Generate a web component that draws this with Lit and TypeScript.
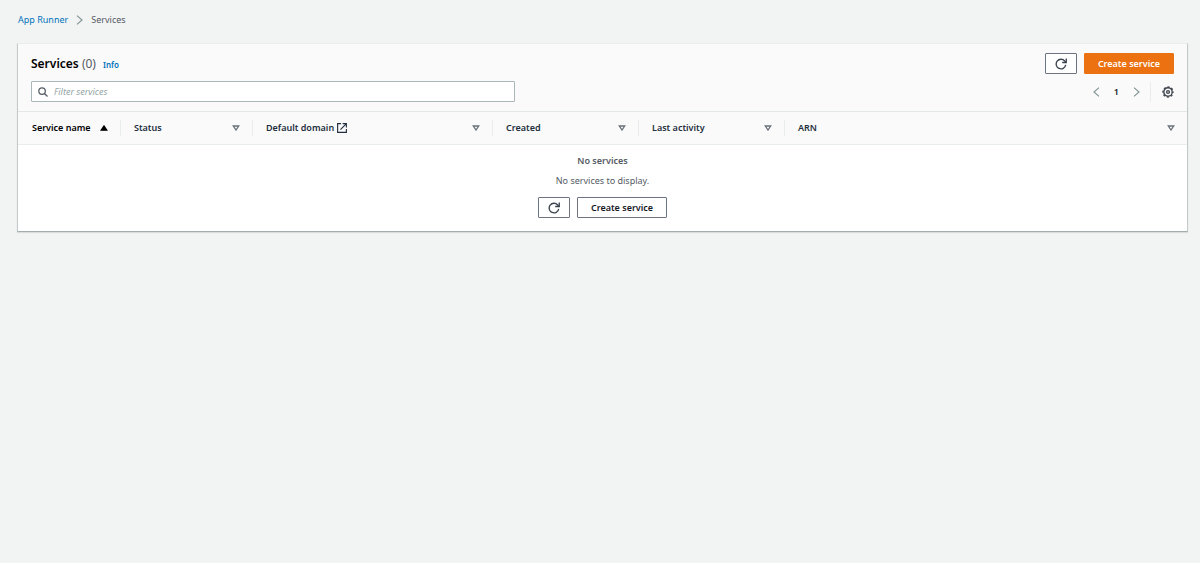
import { LitElement, html, css, svg, nothing } from "lit";
import { customElement, state } from "lit/decorators.js";

interface Column {
  label: string;
  size: string;
  external?: boolean;
}

const COLUMNS: Column[] = [
  { label: "Service name", size: "c-name" },
  { label: "Status", size: "c-status" },
  { label: "Default domain", size: "c-domain", external: true },
  { label: "Created", size: "c-date" },
  { label: "Last activity", size: "c-date" },
  { label: "ARN", size: "c-arn" },
];

const refreshIcon = html`<svg class="icon" width="12" height="12" viewBox="0 0 16 16" aria-hidden="true">
  ${svg`<path d="M14.3 9.2A6.4 6.4 0 1 1 12.9 4L14.6 5.6"/><path d="M15 0.8V6H9.6"/>`}
</svg>`;

const gearIcon = html`<svg class="gear" width="12" height="12" viewBox="0 0 24 24" aria-hidden="true">
  ${svg`<circle cx="12" cy="12" r="8.4" stroke-width="2.8"/>
  <circle cx="12" cy="12" r="2.8" stroke-width="2.8"/>
  <circle cx="12" cy="12" r="10.2" stroke-width="2.6" pathLength="80" stroke-dasharray="5 5" stroke-dashoffset="2.5"/>`}
</svg>`;

@customElement("app-root")
export class AppRoot extends LitElement {
  @state() private sortIndex = 0;

  static styles = css`
    :host {
      display: block;
      box-sizing: border-box;
      min-height: 100vh;
      padding: 13px 12px 13px 17px;
      background: #f2f3f3;
      color: #545b64;
      font: 9px/14px "Noto Sans", "Open Sans", sans-serif;
    }
    *, *::before, *::after { box-sizing: border-box; }
    svg { display: block; fill: none; flex: none; }
    button, input { font: inherit; color: inherit; margin: 0; }
    button { cursor: pointer; }
    a { color: #0073bb; text-decoration: none; }

    .crumbs {
      display: flex;
      align-items: center;
      gap: 8px;
      margin: 0 0 16px;
      padding: 0 0 0 1px;
      list-style: none;
    }
    .crumbs li { display: flex; align-items: center; gap: 8px; }
    .chevron { stroke: #879596; stroke-width: 1.2; }

    .card {
      background: #fff;
      border: 1px solid #c3c9c9;
      border-top-color: #eaeded;
      border-bottom-color: #a3adad;
      box-shadow: 0 1px 1px rgba(0, 28, 36, 0.1);
    }
    .head {
      display: grid;
      gap: 7px;
      padding: 9px 13px;
      background: #fafafa;
    }
    .row { display: flex; align-items: center; justify-content: space-between; }
    .title { display: flex; align-items: baseline; gap: 7px; }
    h2 { margin: 0; font-size: 12px; line-height: 21px; font-weight: 600; color: #000; }
    .count { font-weight: 400; color: #545b64; }
    .info { font-size: 8px; font-weight: 600; }

    .actions { display: flex; justify-content: center; gap: 7px; }
    .btn {
      display: flex;
      align-items: center;
      justify-content: center;
      height: 21px;
      padding: 0 13px;
      border: 1px solid #6b7480;
      border-radius: 1px;
      background: #fff;
      color: #16191f;
      font-weight: 600;
    }
    .square { width: 32px; padding: 0; }
    .primary { background: #ec7211; border-color: #ec7211; color: #fff; }
    .icon { stroke: #3c4450; stroke-width: 1.8; }

    .filter {
      display: flex;
      align-items: center;
      gap: 6px;
      width: 484px;
      height: 21px;
      padding: 0 6px;
      border: 1px solid #aab7b8;
      border-radius: 1px;
      background: #fff;
    }
    .filter svg { stroke: #545b64; stroke-width: 2; }
    .filter input { flex: 1; min-width: 0; padding: 0; border: 0; outline: 0; background: none; }
    .filter input::placeholder { color: #95a5a6; font-style: italic; opacity: 1; }

    .pager { display: flex; align-items: center; }
    .flat { display: flex; padding: 0; border: 0; background: none; }
    .page { padding: 0 14px; color: #16191f; font-weight: 600; }
    .prefs { margin-left: 10px; padding-left: 11px; border-left: 1px solid #eaeded; height: 20px; display: flex; align-items: center; }
    .gear { stroke: #414750; }

    table { width: 100%; border-collapse: collapse; table-layout: fixed; border-top: 1px solid #e3e7e7; }
    th { padding: 8px 0; background: #fafafa; border-bottom: 1px solid #eaeded; font-weight: 600; text-align: left; color: #232f3e; }
    .cell {
      display: flex;
      align-items: center;
      width: 100%;
      height: 16px;
      padding: 0 12px 0 13px;
      border: 0;
      border-right: 1px solid #eaeded;
      background: none;
      font-weight: 600;
    }
    th:first-child .cell { padding-left: 14px; }
    th:last-child .cell { border-right: 0; }
    .cell .ext { margin-left: 3px; stroke: #232f3e; stroke-width: 1.8; }
    .cell .sort { margin-left: auto; stroke: #687078; stroke-width: 1.3; }
    .sorted { color: #000; }
    .cell .sort.up { fill: #000; stroke: #000; }
    .c-name { width: 103px; }
    .c-status { width: 132px; }
    .c-domain { width: 240px; }
    .c-date { width: 146px; }
    td { padding: 9px 0 13px; text-align: center; }
    .none { margin: 0 0 6px; font-weight: 600; }
    .hint { margin: 0 0 9px; }
  `;

  private header(col: Column, i: number) {
    const on = i === this.sortIndex;
    return html`<th scope="col" aria-sort=${on ? "ascending" : nothing}>
      <button class="cell ${on ? "sorted" : ""}" @click=${() => (this.sortIndex = i)}>
        <span>${col.label}</span>
        ${col.external
          ? html`<svg class="ext" width="10" height="10" viewBox="0 0 16 16" aria-hidden="true">
              <path d="M6.5 1H1V15H15V9.5M9 1H15V7M15 1L5.5 10.5" />
            </svg>`
          : nothing}
        ${on
          ? html`<svg class="sort up" width="8" height="6" viewBox="0 0 8 6" aria-hidden="true"><path d="M1.2 5.2H6.8L4 1Z" /></svg>`
          : html`<svg class="sort" width="8" height="6" viewBox="0 0 8 6" aria-hidden="true"><path d="M1.3 1H6.7L4 5Z" /></svg>`}
      </button>
    </th>`;
  }

  render() {
    return html`
      <nav aria-label="Breadcrumbs">
        <ol class="crumbs">
          <li>
            <a href="#">App Runner</a>
            <svg class="chevron" width="7" height="10" viewBox="0 0 7 10" aria-hidden="true"><path d="M1 0.6L6 5L1 9.4" /></svg>
          </li>
          <li>Services</li>
        </ol>
      </nav>
      <section class="card">
        <div class="head">
          <div class="row">
            <div class="title">
              <h2>Services <span class="count">(0)</span></h2>
              <a class="info" href="#">Info</a>
            </div>
            <div class="actions">
              <button class="btn square" aria-label="Refresh">${refreshIcon}</button>
              <button class="btn primary">Create service</button>
            </div>
          </div>
          <div class="row">
            <label class="filter">
              <svg width="10" height="10" viewBox="0 0 16 16" aria-hidden="true"><circle cx="6.5" cy="6.5" r="5.2" /><path d="M10.3 10.3L15.2 15.2" /></svg>
              <input type="text" placeholder="Filter services" aria-label="Filter services" />
            </label>
            <div class="pager">
              <button class="flat" aria-label="Previous page">
                <svg class="chevron" width="7" height="10" viewBox="0 0 7 10"><path d="M6 0.6L1 5L6 9.4" /></svg>
              </button>
              <span class="page">1</span>
              <button class="flat" aria-label="Next page">
                <svg class="chevron" width="7" height="10" viewBox="0 0 7 10"><path d="M1 0.6L6 5L1 9.4" /></svg>
              </button>
              <div class="prefs"><button class="flat" aria-label="Preferences">${gearIcon}</button></div>
            </div>
          </div>
        </div>
        <table>
          <colgroup>${COLUMNS.map((c) => html`<col class=${c.size} />`)}</colgroup>
          <thead><tr>${COLUMNS.map((c, i) => this.header(c, i))}</tr></thead>
          <tbody>
            <tr>
              <td colspan=${COLUMNS.length}>
                <p class="none">No services</p>
                <p class="hint">No services to display.</p>
                <div class="actions">
                  <button class="btn square" aria-label="Refresh">${refreshIcon}</button>
                  <button class="btn">Create service</button>
                </div>
              </td>
            </tr>
          </tbody>
        </table>
      </section>
    `;
  }
}
